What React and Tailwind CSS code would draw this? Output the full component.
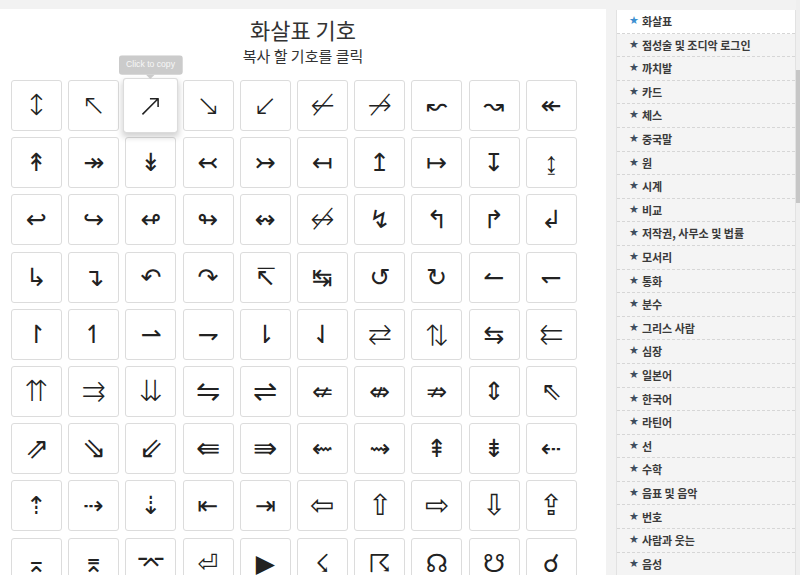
import React from 'react';

// Symbol rows, as shown on the page
const SYMBOLS = [
  '↕', '↖', '↗', '↘', '↙', '↚', '↛', '↜', '↝', '↞',
  '↟', '↠', '↡', '↢', '↣', '↤', '↥', '↦', '↧', '↨',
  '↩', '↪', '↫', '↬', '↭', '↮', '↯', '↰', '↱', '↲',
  '↳', '↴', '↶', '↷', '↸', '↹', '↺', '↻', '↼', '↽',
  '↾', '↿', '⇀', '⇁', '⇂', '⇃', '⇄', '⇅', '⇆', '⇇',
  '⇈', '⇉', '⇊', '⇋', '⇌', '⇍', '⇎', '⇏', '⇕', '⇖',
  '⇗', '⇘', '⇙', '⇚', '⇛', '⇜', '⇝', '⇞', '⇟', '⇠',
  '⇡', '⇢', '⇣', '⇤', '⇥', '⇦', '⇧', '⇨', '⇩', '⇪',
  '⌅', '⌆', '⌤', '⏎', '▶', '☇', '☈', '☊', '☋', '☌',
];

// glyphs that the light face of DejaVu draws cleanly
const LIGHT = new Set('↕↖↗↘↙↚↛↨↮⇄⇅⇇⇈⇉⇊⇋⇌⇗⇘⇙⇚⇛⇦⇧⇨⇩⇪'.split(''));

const CATEGORIES = [
  '화살표', '점성술 및 조디악 로그인', '까치발', '카드', '체스', '중국말', '원', '시계',
  '비교', '저작권, 사무소 및 법률', '모서리', '통화', '분수', '그리스 사람', '심장', '일본어',
  '한국어', '라틴어', '선', '수학', '음표 및 음악', '번호', '사람과 웃는', '음성',
];

const HOVERED = 2;

const SymbolCell = ({ char, hovered }) => (
  <div
    className={`relative w-[51px] h-[51px] flex items-center justify-center bg-white border border-[#dcdcdc] rounded-[3px] leading-none text-[#222] ${
      LIGHT.has(char) ? 'text-[29px] font-extralight' : 'text-[25px] font-normal'
    } ${hovered ? 'scale-[1.08] shadow-[0_3px_6px_rgba(0,0,0,0.18)] z-10' : ''}`}
    style={{ fontFamily: '"DejaVu Sans", sans-serif' }}
  >
    {char}
    {hovered && (
      <div className="absolute -top-[22px] left-1/2 -translate-x-1/2 flex flex-col items-center">
        <div className="px-[7px] h-[18px] flex items-center rounded-[3px] bg-[#cbcbcb] text-[8px] font-normal text-[#f7f7f7] whitespace-nowrap font-['Liberation_Sans',sans-serif]">
          Click to copy
        </div>
        <div className="w-0 h-0 border-l-[4px] border-r-[4px] border-t-[4px] border-l-transparent border-r-transparent border-t-[#cbcbcb]" />
      </div>
    )}
  </div>
);

const App = () => {
  return (
    <div className="w-[800px] h-[575px] overflow-hidden bg-[#f2f2f2] flex font-['Noto_Sans_CJK_KR',sans-serif]">
      <div className="flex-1 flex gap-[10px] pt-[9px]">
        {/* main panel */}
        <div className="w-[606px] bg-white flex flex-col pt-[5px]">
          <h1 className="h-[30px] leading-[30px] text-center text-[22px] font-normal text-[#333]">
            화살표 기호
          </h1>
          <h2 className="h-[22px] leading-[22px] text-center text-[15px] font-normal text-[#333] mt-[1px]">
            복사 할 기호를 클릭
          </h2>
          <div className="grid grid-cols-[repeat(10,51px)] gap-x-[6.2px] gap-y-[6.2px] pl-[11px] mt-[13px]">
            {SYMBOLS.map((s, i) => (
              <SymbolCell key={i} char={s} hovered={i === HOVERED} />
            ))}
          </div>
        </div>

        {/* category list */}
        <div className="w-[180px] mt-[1px] flex flex-col border-l border-r border-[#e2e2e2] self-start">
          {CATEGORIES.map((name, i) => (
            <div
              key={name}
              className={`h-[23.6px] flex items-center pl-[12px] border-b border-dashed border-[#d6d6d6] text-[11px] font-semibold text-[#3a3a3a] ${
                i === 0 ? 'bg-white' : 'bg-[#f4f4f4]'
              }`}
            >
              <span
                className={`text-[11px] mr-[3px] ${i === 0 ? 'text-[#3d8fd0]' : 'text-[#3e4d5c]'}`}
                style={{ fontFamily: '"DejaVu Sans", sans-serif' }}
              >
                ★
              </span>
              {name}
            </div>
          ))}
        </div>
      </div>

      {/* scrollbar */}
      <div className="w-[4px] bg-[#efefef] flex flex-col">
        <div className="h-[70px]" />
        <div className="h-[133px] bg-[#c6c6c6]" />
      </div>
    </div>
  );
};

export default App;
